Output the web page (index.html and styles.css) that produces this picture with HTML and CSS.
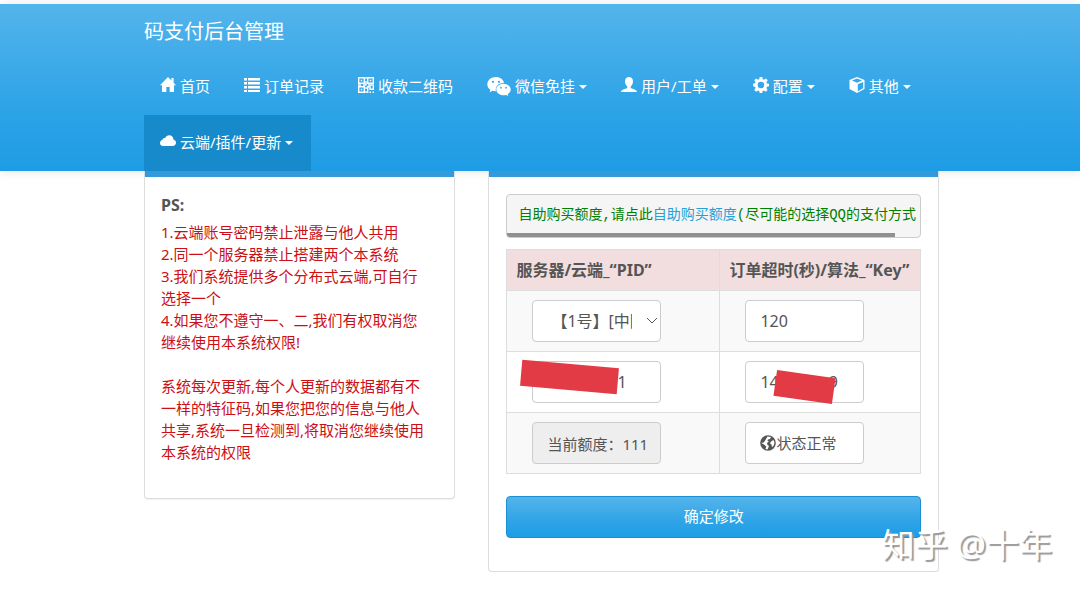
FILE: index.html
```html
<!DOCTYPE html>
<html lang="zh-CN">
<head>
<meta charset="utf-8">
<title>码支付后台管理</title>
<link rel="stylesheet" href="styles.css">
</head>
<body>
<header class="navbar">
  <div class="container">
    <a class="brand" href="#">码支付后台管理</a>
    <nav class="nav">
      <a class="nav-link" href="#"><svg class="icon" viewBox="0 0 16 16"><path d="M8 0 0 8.2h2V15h4.3v-5h3.4v5H14V8.2h2L13.6 5.700V1h-2.200v2.500z"/></svg>首页</a>
      <a class="nav-link" href="#"><svg class="icon" viewBox="0 0 16 16"><path d="M0 1h3v2.500H0zM4 1h12v2.500H4zM0 5h3v2.500H0zM4 5h12v2.500H4zM0 9h3v2.500H0zM4 9h12v2.500H4zM0 13h3v2H0zM4 13h12v2H4z"/></svg>订单记录</a>
      <a class="nav-link" href="#"><svg class="icon icon-qr" viewBox="0 0 16 16"><path d="M.7.700h5.600v5.600H.7zM9.700.700h5.600v5.600H9.700zM.7 9.700h5.600v5.600H.7zM2.800 3.500h1.400M11.800 3.500h1.400M2.800 12.500h1.400M9.700 16V9.700H12v2.600h3.300V9M11.500 15.200h1.500M14.500 15.200H16M8 0v2M8 4v4H5M0 8h3M10 8h6M8 10v2M8 14v2"/></svg>收款二维码</a>
      <a class="nav-link" href="#"><svg class="icon icon-wechat" viewBox="0 0 24 20"><path d="M9 1C4 1 .3 4.200.3 8.200c0 2.300 1.200 4.300 3.100 5.600L2.600 16.300l3-1.500c1.100.3 2.100.5 3.300.4-.9-4.500 2.600-8.400 8.200-8.400C16.200 3.300 13 1 9 1z"/><path d="M16.500 7.700c-4 0-7.200 2.600-7.200 5.800s3.200 5.800 7.200 5.800c.9 0 1.700-.1 2.500-.4l2.300 1.100-.6-2c1.900-1.100 3-2.700 3-4.500 0-3.200-3.200-5.800-7.200-5.800z"/><g class="eyes"><circle cx="6" cy="5.800" r="1.100"/><circle cx="12" cy="5.800" r="1.100"/><circle cx="14" cy="11.700" r=".9"/><circle cx="19" cy="11.700" r=".9"/></g></svg>微信免挂<span class="caret"></span></a>
      <a class="nav-link" href="#"><svg class="icon" viewBox="0 0 16 16"><path d="M8 0C5.500 0 4 1.800 4 4.300c0 2.200.8 4 2.300 5.100v1.300C5.800 11.800 0 12 0 15h16c0-3-5.800-3.200-6.300-4.300V9.400C11.200 8.300 12 6.500 12 4.300 12 1.800 10.500 0 8 0z"/></svg>用户/工单<span class="caret"></span></a>
      <a class="nav-link" href="#"><svg class="icon" viewBox="0 0 16 16"><path fill-rule="evenodd" d="M6.700 0h2.600l.5 2.200 1.200.5 1.900-1.200 1.800 1.800L13.500 5.200l.4 1.200 2.100.4v2.500l-2.100.5-.5 1.200 1.200 1.900-1.800 1.800-1.900-1.200-1.200.5-.5 2H6.700l-.5-2-1.200-.5-1.900 1.200-1.800-1.800 1.200-1.900-.5-1.200L0 9.300V6.700l2-.4.5-1.200-1.200-1.900 1.800-1.800L5 2.700l1.200-.5zM8 4.700a3.300 3.300 0 1 0 0 6.600 3.300 3.300 0 0 0 0-6.600z"/></svg>配置<span class="caret"></span></a>
      <a class="nav-link" href="#"><svg class="icon" viewBox="0 0 16 16"><path fill-rule="evenodd" d="M8 0 .5 3v9L8 16l7.500-4V3zM8 1.500 13 3.600 8 5.700 3 3.600zM8.800 7.200l5.400-2.200v6.200l-5.400 3z"/></svg>其他<span class="caret"></span></a>
      <a class="nav-link active" href="#"><svg class="icon" viewBox="0 0 16 16"><path d="M3.200 13C1.300 13 0 11.800 0 10c0-1.600 1-2.700 2.400-3C2.500 5.400 4 4.600 5.200 5.100 6 3.200 7.400 2.300 9.200 2.300c2.500 0 4.200 1.800 4.200 4.200C15 6.900 16 8.100 16 9.700c0 1.900-1.400 3.300-3.300 3.300z"/></svg>云端/插件/更新<span class="caret"></span></a>
    </nav>
  </div>
</header>
<main class="container columns">
  <section class="panel notice">
    <h1 class="notice-title">PS:</h1>
    <p class="notice-text">1.云端账号密码禁止泄露与他人共用<br>2.同一个服务器禁止搭建两个本系统<br>3.我们系统提供多个分布式云端,可自行<br>选择一个<br>4.如果您不遵守一、二,我们有权取消您<br>继续使用本系统权限!</p>
    <p class="notice-text">系统每次更新,每个人更新的数据都有不<br>一样的特征码,如果您把您的信息与他人<br>共享,系统一旦检测到,将取消您继续使用<br>本系统的权限</p>
  </section>
  <form class="panel settings">
    <div class="tip">
      <div class="tip-text">自助购买额度,请点此<a href="#">自助购买额度</a>(尽可能的选择QQ的支付方式</div>
      <div class="tip-bar"></div>
    </div>
    <table class="table">
      <thead><tr><th>服务器/云端_“PID”</th><th>订单超时(秒)/算法_“Key”</th></tr></thead>
      <tbody>
        <tr>
          <td><div class="select-wrap"><select class="field field-select" aria-label="服务器"><option>【1号】[中国]</option></select><svg class="chevron" viewBox="0 0 12 8"><path d="M1 1l5 5 5-5"/></svg></div></td>
          <td><input class="field" aria-label="订单超时" value="120"></td>
        </tr>
        <tr>
          <td><div class="masked"><input class="field field-end" aria-label="PID" value="1"><span class="mask mask-pid"></span></div></td>
          <td><div class="masked"><input class="field" aria-label="Key" value="14            9"><span class="mask mask-key"></span></div></td>
        </tr>
        <tr>
          <td><input class="field field-readonly" aria-label="当前额度" value="当前额度：1110" readonly></td>
          <td><div class="field status"><svg class="globe" viewBox="0 0 16 16"><circle cx="8" cy="8" r="7.800"/><path d="M7.500 1.500 11 2 10 4l-2 .5L7.500 6l1.500.5L7 8l.5 2L9 11l-1.500 3.500L5.500 14l.8-2.500L4 9.500 2 8.500l-.5-1L3 8l1.500-1.500L6 4zM11 6.500l2.500-1.500 1 2.500L13.500 11l-1.500 1-.5-2.500-1.500-1z"/></svg>状态正常</div></td>
        </tr>
      </tbody>
    </table>
    <button class="submit" type="submit">确定修改</button>
  </form>
</main>
<div class="watermark">知乎 @十年</div>
</body>
</html>
```
FILE: styles.css
```css
* {
  box-sizing: border-box;
}

body {
  margin: 0;
  padding-top: 4px;
  background: #fff;
  color: #555;
  font: 15px/22px "Noto Sans", "Noto Sans CJK SC", sans-serif;
}

a {
  color: #2a9fd6;
  text-decoration: none;
}

.container {
  width: 100%;
  padding: 0 141px 0 144px;
}

.navbar {
  background: linear-gradient(#54b4eb, #2fa4e7 60%, #1d9ce5);
  box-shadow: 0 1px 10px rgba(0, 0, 0, 0.1);
}

.brand {
  display: block;
  padding: 14px 0;
  color: #fff;
  font-size: 20px;
  line-height: 27px;
}

.nav {
  display: flex;
  flex-wrap: wrap;
}

.nav-link {
  display: flex;
  align-items: center;
  height: 56px;
  padding: 0 18px 2px 16px;
  color: #fff;
}

.nav-link.active {
  background: #178acc;
}

.icon {
  width: 16px;
  height: 16px;
  margin: 0 4px 2px 0;
  fill: #fff;
}

.icon-qr {
  fill: none;
  stroke: #fff;
  stroke-width: 1.4;
}

.icon-wechat {
  width: 24px;
  height: 20px;
  margin-bottom: 0;
}

.eyes {
  fill: #3aa8e8;
}

.caret {
  margin: 2px 0 0 4px;
  border: 4px solid transparent;
  border-top-color: #fff;
  border-bottom: 0;
}

.columns {
  display: grid;
  grid-template-columns: 311fr 450fr;
  gap: 33px;
  align-items: start;
}

.panel {
  border: 1px solid #ddd;
  border-top: 0;
  border-radius: 0 0 4px 4px;
  padding: 23px 17px 17px;
  background: linear-gradient(#349bda 6px, #fff 6px) padding-box;
  box-shadow: 0 1px 1px rgba(0, 0, 0, 0.05);
}

.notice {
  padding-left: 16px;
  padding-bottom: 13px;
}

.notice-title {
  margin: 0 0 5px;
  font-size: 16px;
  line-height: 22px;
}

.notice-text {
  margin: 0 0 22px;
  color: #cc0f14;
  white-space: nowrap;
}

.settings {
  padding-bottom: 33px;
  min-width: 0;
}

.tip {
  overflow: hidden;
  margin-bottom: 11px;
  border: 1px solid #ccc;
  border-radius: 4px;
  background: #f5f5f5;
}

.tip-text {
  padding: 9px 0 7px 11px;
  color: #008000;
  font: 14px/22px "Liberation Mono", "Noto Sans CJK SC", monospace;
  white-space: nowrap;
}

.tip-bar {
  width: 94%;
  height: 4px;
  background: #909090;
}

.table {
  width: 100%;
  margin-bottom: 22px;
  border-collapse: collapse;
  table-layout: fixed;
}

.table th,
.table td {
  border: 1px solid #ddd;
}

.table th {
  height: 41px;
  padding: 0 9px;
  background: #f2dede;
  font-size: 16px;
  text-align: left;
  white-space: nowrap;
}

.table th:first-child {
  width: 213px;
}

.table td {
  height: 61px;
  padding: 9px 56px 9px 25px;
}

.table td:first-child {
  padding-right: 58px;
}

.table tbody tr:nth-child(odd) {
  background: #f9f9f9;
}

.field {
  display: block;
  width: 100%;
  height: 42px;
  padding: 0 12px 0 14px;
  border: 1px solid #ccc;
  border-radius: 4px;
  background: #fff;
  color: #555;
  font: inherit;
  font-size: 16px;
}

.field-select {
  appearance: none;
  padding-left: 18px;
  padding-right: 28px;
}

.field-readonly {
  background: #eee;
  font-size: 15px;
}

.field-end {
  padding-left: 84px;
}

.select-wrap,
.masked {
  position: relative;
}

.chevron {
  position: absolute;
  top: 17px;
  right: 3px;
  width: 12px;
  height: 8px;
  fill: none;
  stroke: #555;
}

.mask {
  position: absolute;
  background: #e23b46;
}

.mask-pid {
  top: 3px;
  left: -11px;
  width: 97px;
  height: 26px;
  transform: rotate(5deg);
}

.mask-key {
  top: 13px;
  left: 30px;
  width: 59px;
  height: 26px;
  transform: rotate(8deg);
}

.status {
  display: flex;
  align-items: center;
  font-size: 15px;
}

.globe {
  flex: none;
  width: 16px;
  height: 16px;
  fill: #555;
}

.globe path {
  fill: #fff;
}

.submit {
  display: block;
  width: 100%;
  height: 42px;
  padding: 0 0 2px;
  border: 1px solid #1d8fd3;
  border-radius: 4px;
  background: linear-gradient(#54b4eb, #2fa4e7 60%, #1d9ce5);
  color: #fff;
  font: inherit;
}

.watermark {
  position: absolute;
  right: 28px;
  bottom: 25px;
  color: #fff;
  font-size: 33px;
  line-height: 40px;
  text-shadow: 2px 2px 1px #999;
}
```
